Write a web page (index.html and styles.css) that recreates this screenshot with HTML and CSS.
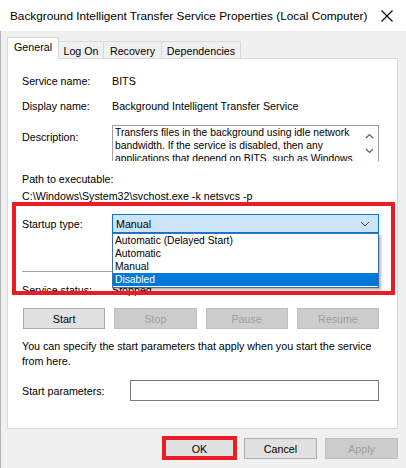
FILE: index.html
```html
<!DOCTYPE html>
<html>
<head>
<meta charset="utf-8">
<link rel="stylesheet" href="styles.css">
</head>
<body>
<div class="window">
  <div class="titlebar">
    <span class="title">Background Intelligent Transfer Service Properties (Local Computer)</span>
    <svg class="close" width="12" height="12" viewBox="0 0 12 12"><path d="M0.5 0.5 L11.5 11.5 M11.5 0.5 L0.5 11.5" stroke="#000" stroke-width="1.1" fill="none"/></svg>
  </div>
  <div class="client">
    <div class="tabs">
      <div class="tab active t1">General</div>
      <div class="tab t2">Log On</div>
      <div class="tab t3">Recovery</div>
      <div class="tab t4">Dependencies</div>
    </div>
    <div class="panel">
      <div class="row r1"><span class="lbl">Service name:</span><span>BITS</span></div>
      <div class="row r2"><span class="lbl">Display name:</span><span>Background Intelligent Transfer Service</span></div>
      <div class="row desc">
        <span class="lbl dlbl">Description:</span>
        <div class="textbox">
          <div class="tbtext">Transfers files in the background using idle network bandwidth. If the service is disabled, then any applications that depend on BITS, such as Windows</div>
          <div class="scroll">
            <svg width="9" height="6" viewBox="0 0 9 6"><path d="M1 5 L4.5 1.5 L8 5" stroke="#606060" stroke-width="1.2" fill="none"/></svg>
            <svg width="9" height="6" viewBox="0 0 9 6"><path d="M1 1 L4.5 4.5 L8 1" stroke="#606060" stroke-width="1.2" fill="none"/></svg>
          </div>
        </div>
      </div>
      <div class="path-lbl">Path to executable:</div>
      <div class="path-val">C:\Windows\System32\svchost.exe -k netsvcs -p</div>
      <div class="row startup">
        <span class="lbl">Startup type:</span>
        <div class="combo"><span>Manual</span>
          <svg width="10" height="6" viewBox="0 0 10 6"><path d="M1 1 L5 5 L9 1" stroke="#404040" stroke-width="1" fill="none"/></svg>
        </div>
      </div>
      <div class="sep"></div>
      <div class="row status"><span class="lbl">Service status:</span><span>Stopped</span></div>
      <div class="svcbtns">
        <div class="btn">Start</div>
        <div class="btn dis">Stop</div>
        <div class="btn dis">Pause</div>
        <div class="btn dis">Resume</div>
      </div>
      <p class="note">You can specify the start parameters that apply when you start the service from here.</p>
      <div class="row params"><span class="lbl plbl">Start parameters:</span><div class="input"></div></div>

      <div class="droplist">
        <div class="item">Automatic (Delayed Start)</div>
        <div class="item">Automatic</div>
        <div class="item">Manual</div>
        <div class="item sel">Disabled</div>
      </div>
      <div class="hl-startup"></div>
    </div>
    <div class="footer">
      <div class="btn fbtn ok">OK<span class="hl-ok"></span></div>
      <div class="btn fbtn">Cancel</div>
      <div class="btn fbtn dis">Apply</div>
    </div>
  </div>
</div>
</body>
</html>
```
FILE: styles.css
```css
* { box-sizing: border-box; }
html, body { margin: 0; padding: 0; }
body {
  width: 406px;
  height: 468px;
  overflow: hidden;
  font-family: "Liberation Sans", Arial, sans-serif;
  font-size: 10.7px;
  color: #000;
  background: #f0f0f0;
}
.window { width: 406px; height: 468px; display: flex; flex-direction: column; }
.titlebar {
  height: 31px;
  background: #fff;
  display: flex;
  align-items: center;
  padding-left: 10px;
  padding-right: 13px;
  justify-content: space-between;
}
.title { font-size: 11.8px; color: #000; padding-top: 1px; white-space: nowrap; }
.close { display: block; margin-top: 1px; }
.client {
  flex: 1;
  background: #f0f0f0;
  border-left: 1px solid #b4b4b4;
  padding: 6px 8px 0 6px;
}
.tabs { display: flex; height: 21px; align-items: flex-end; position: relative; z-index: 2; }
.tab {
  height: 17px;
  border: 1px solid #d9d9d9;
  border-bottom: none;
  border-left: none;
  background: #f0f0f0;
  display: flex;
  align-items: center;
  justify-content: center;
  padding-top: 1px;
}
.tab.active {
  height: 22px;
  margin-bottom: -1px;
  background: #fff;
  border-left: 1px solid #d9d9d9;
  padding-bottom: 4px;
}
.t1 { width: 52px; }
.t2 { width: 45px; }
.t3 { width: 58px; }
.t4 { width: 79px; }
.panel {
  position: relative;
  height: 371px;
  background: #fff;
  border: 1px solid #d9d9d9;
  padding: 14px 18px 0 14px;
}
.row { display: flex; align-items: flex-start; line-height: 16px; }
.lbl { width: 90px; flex: none; }
.r2 { margin-top: 9px; }
.desc { margin-top: 11px; }
.dlbl { padding-top: 4px; }
.textbox {
  width: 267px;
  height: 36px;
  border: 1px solid #a0a0a0;
  border-bottom: none;
  display: flex;
  overflow: hidden;
}
.tbtext {
  flex: 1;
  height: 35px;
  font-size: 10.3px;
  line-height: 13px;
  padding: 0 0 0 2px;
  overflow: hidden;
}
.scroll {
  width: 17px;
  flex: none;
  display: flex;
  flex-direction: column;
  align-items: center;
  gap: 9px;
  padding-top: 7px;
}
.scroll svg { display: block; }
.path-lbl { margin-top: 10px; line-height: 16px; }
.path-val { margin-top: 1px; line-height: 16px; }
.startup { margin-top: 10px; align-items: center; }
.combo {
  width: 267px;
  height: 19px;
  background: #cce4f7;
  border: 1px solid #0078d7;
  display: flex;
  align-items: center;
  justify-content: space-between;
  padding: 0 8px 0 3px;
}
.combo svg { display: block; }
.sep { margin-top: 38px; height: 1px; background: #a0a0a0; width: 357px; }
.status { margin-top: 10px; }
.svcbtns {
  margin-top: 10px;
  display: grid;
  grid-template-columns: repeat(4, 1fr);
  column-gap: 9px;
  width: 356px;
  margin-left: 1px;
}
.btn {
  height: 21px;
  background: #e1e1e1;
  border: 1px solid #adadad;
  display: flex;
  align-items: center;
  justify-content: center;
}
.btn.dis { background: #cccccc; border-color: #bfbfbf; color: #a0a0a0; }
.note { margin: 10px 0 0 0; line-height: 15px; }
.params { margin-top: 11px; align-items: center; }
.plbl { width: 108px; }
.input { width: 249px; height: 21px; border: 1px solid #7a7a7a; background: #fff; }

.droplist {
  position: absolute;
  left: 104px;
  top: 174px;
  width: 267px;
  height: 55px;
  background: #fff;
  border: 1px solid #3c6ea8;
  box-shadow: 2px 2px 2px rgba(0,0,0,0.28);
  font-size: 10.3px;
  z-index: 3;
}
.item { height: 13px; line-height: 13px; padding-left: 2px; }
.item.sel { background: #0078d7; color: #fff; }
.hl-startup {
  position: absolute;
  left: 4px;
  top: 143px;
  width: 383px;
  height: 93px;
  border: 4px solid #ed1c24;
  z-index: 4;
}
.footer {
  display: flex;
  justify-content: flex-end;
  gap: 8px;
  margin-top: 9px;
}
.fbtn { width: 73px; }
.ok { position: relative; }
.hl-ok {
  position: absolute;
  left: -2px;
  right: -2px;
  top: -3px;
  bottom: -2px;
  border: 4px solid #ed1c24;
}
```
